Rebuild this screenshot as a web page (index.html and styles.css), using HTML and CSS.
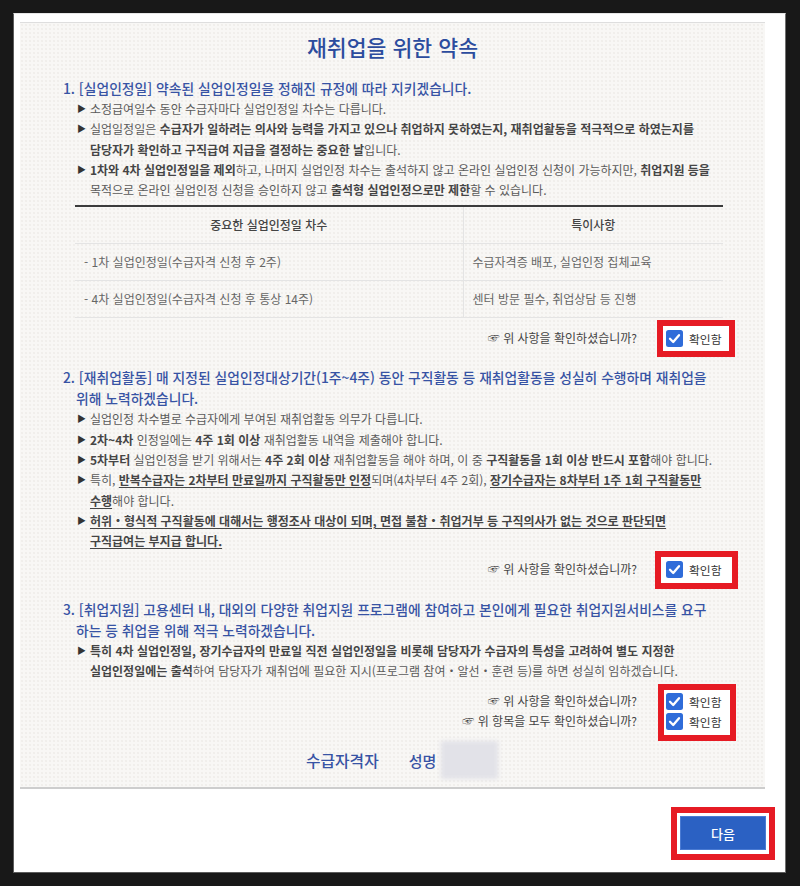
FILE: index.html
```html
<!DOCTYPE html>
<html lang="ko">
<head>
<meta charset="utf-8">
<title>재취업을 위한 약속</title>
<link rel="stylesheet" href="styles.css">
</head>
<body>
<div class="panel">
  <div class="pledge">
    <h1 class="title">재취업을 위한 약속</h1>

    <section class="sec sec1">
      <h2 class="head">1. [실업인정일] 약속된 실업인정일을 정해진 규정에 따라 지키겠습니다.</h2>
      <ul class="bullets">
        <li><span class="mk">▶</span><span>소정급여일수 동안 수급자마다 실업인정일 차수는 다릅니다.</span></li>
        <li><span class="mk">▶</span><span>실업일정일은 <b>수급자가 일하려는 의사와 능력을 가지고 있으나 취업하지 못하였는지, 재취업활동을 적극적으로 하였는지를</b><br><b>담당자가 확인하고 구직급여 지급을 결정하는 중요한 날</b>입니다.</span></li>
        <li><span class="mk">▶</span><span><b>1차와 4차 실업인정일을 제외</b>하고, 나머지 실업인정 차수는 출석하지 않고 온라인 실업인정 신청이 가능하지만, <b>취업지원 등을</b><br>목적으로 온라인 실업인정 신청을 승인하지 않고 <b>출석형 실업인정으로만 제한</b>할 수 있습니다.</span></li>
      </ul>
      <table class="tbl">
        <thead>
          <tr><th class="c1">중요한 실업인정일 차수</th><th>특이사항</th></tr>
        </thead>
        <tbody>
          <tr><td class="c1">- 1차 실업인정일(수급자격 신청 후 2주)</td><td>수급자격증 배포, 실업인정 집체교육</td></tr>
          <tr><td class="c1">- 4차 실업인정일(수급자격 신청 후 통상 14주)</td><td>센터 방문 필수, 취업상담 등 진행</td></tr>
        </tbody>
      </table>
      <div class="check-row">
        <span class="q">☞ 위 사항을 확인하셨습니까?</span>
        <label class="hl hl1"><span class="cb"><svg viewBox="0 0 17 17" width="17" height="17"><rect x="0" y="0" width="17" height="17" rx="2.5" fill="#2f6cd9"/><path d="M4 8.8 L7.2 12 L13 5.2" fill="none" stroke="#fff" stroke-width="2.3" stroke-linecap="round" stroke-linejoin="round"/></svg></span><span class="ok">확인함</span></label>
      </div>
    </section>

    <section class="sec sec2">
      <h2 class="head">2. [재취업활동] 매 지정된 실업인정대상기간(1주~4주) 동안 구직활동 등 재취업활동을 성실히 수행하며 재취업을<br>위해 노력하겠습니다.</h2>
      <ul class="bullets">
        <li><span class="mk">▶</span><span>실업인정 차수별로 수급자에게 부여된 재취업활동 의무가 다릅니다.</span></li>
        <li><span class="mk">▶</span><span><b>2차~4차</b> 인정일에는 <b>4주 1회 이상</b> 재취업활동 내역을 제출해야 합니다.</span></li>
        <li><span class="mk">▶</span><span><b>5차부터</b> 실업인정을 받기 위해서는 <b>4주 2회 이상</b> 재취업활동을 해야 하며, 이 중 <b>구직활동을 1회 이상 반드시 포함</b>해야 합니다.</span></li>
        <li><span class="mk">▶</span><span>특히, <b class="u">반복수급자는 2차부터 만료일까지 구직활동만 인정</b>되며(4차부터 4주 2회), <b class="u">장기수급자는 8차부터 1주 1회 구직활동만</b><br><b class="u">수행</b>해야 합니다.</span></li>
        <li><span class="mk">▶</span><span><b class="u">허위・형식적 구직활동에 대해서는 행정조사 대상이 되며, 면접 불참・취업거부 등 구직의사가 없는 것으로 판단되면</b><br><b class="u">구직급여는 부지급 합니다.</b></span></li>
      </ul>
      <div class="check-row tight">
        <span class="q">☞ 위 사항을 확인하셨습니까?</span>
        <label class="hl hl2"><span class="cb"><svg viewBox="0 0 17 17" width="17" height="17"><rect x="0" y="0" width="17" height="17" rx="2.5" fill="#2f6cd9"/><path d="M4 8.8 L7.2 12 L13 5.2" fill="none" stroke="#fff" stroke-width="2.3" stroke-linecap="round" stroke-linejoin="round"/></svg></span><span class="ok">확인함</span></label>
      </div>
    </section>

    <section class="sec sec3">
      <h2 class="head">3. [취업지원] 고용센터 내, 대외의 다양한 취업지원 프로그램에 참여하고 본인에게 필요한 취업지원서비스를 요구<br>하는 등 취업을 위해 적극 노력하겠습니다.</h2>
      <ul class="bullets">
        <li><span class="mk">▶</span><span><b>특히 4차 실업인정일, 장기수급자의 만료일 직전 실업인정일을 비롯해 담당자가 수급자의 특성을 고려하여 별도 지정한</b><br><b>실업인정일에는 출석</b>하여 담당자가 재취업에 필요한 지시(프로그램 참여・알선・훈련 등)를 하면 성실히 임하겠습니다.</span></li>
      </ul>
      <div class="check-row multi">
        <div class="qs">
          <span class="q">☞ 위 사항을 확인하셨습니까?</span>
          <span class="q">☞ 위 항목을 모두 확인하셨습니까?</span>
        </div>
        <div class="hl hl3">
          <label class="opt"><span class="cb"><svg viewBox="0 0 17 17" width="17" height="17"><rect x="0" y="0" width="17" height="17" rx="2.5" fill="#2f6cd9"/><path d="M4 8.8 L7.2 12 L13 5.2" fill="none" stroke="#fff" stroke-width="2.3" stroke-linecap="round" stroke-linejoin="round"/></svg></span><span class="ok">확인함</span></label>
          <label class="opt"><span class="cb"><svg viewBox="0 0 17 17" width="17" height="17"><rect x="0" y="0" width="17" height="17" rx="2.5" fill="#2f6cd9"/><path d="M4 8.8 L7.2 12 L13 5.2" fill="none" stroke="#fff" stroke-width="2.3" stroke-linecap="round" stroke-linejoin="round"/></svg></span><span class="ok">확인함</span></label>
        </div>
      </div>
    </section>

    <div class="sign">
      <span class="who">수급자격자</span>
      <span class="nm">성명</span>
      <span class="blur"></span>
    </div>
  </div>

  <div class="actions">
    <div class="btn-hl"><button class="btn" type="button">다음</button></div>
  </div>
</div>
</body>
</html>
```

FILE: styles.css
```css
html, body {
  margin: 0;
  padding: 0;
}
body {
  background: #181818;
  padding: 13px 0 0 13px;
  height: 886px;
  box-sizing: border-box;
  font-family: "Noto Sans CJK KR", "Noto Sans", sans-serif;
  overflow: hidden;
}
.panel {
  box-sizing: border-box;
  width: 773px;
  height: 860px;
  background: #ffffff;
  border: 1px solid #5c5c5c;
  border-top-color: #e6e6e6;
  border-right-color: #707070;
}
.pledge {
  box-sizing: border-box;
  width: 745px;
  margin: 8px 0 0 6px;
  background-color: #f8f7f5;
  background-image: radial-gradient(circle, #f0eeeb 0.7px, transparent 1px);
  background-size: 4px 4px;
  border-top: 1px solid #dedede;
  border-bottom: 2px solid #cdcdcd;
  padding: 9px 0 8px;
}
.title {
  margin: 0;
  text-align: center;
  font-size: 21.6px;
  line-height: 30px;
  font-weight: 500;
  color: #2c4c9e;
}
.sec {
  padding: 0 30px 0 43px;
}
.sec1 { margin-top: 16px; }
.sec2 { margin-top: 10.5px; }
.sec3 { margin-top: 10px; }
.head {
  margin: 0;
  font-size: 13.8px;
  line-height: 21px;
  font-weight: 500;
  color: #3753a4;
  padding-left: 13px;
  text-indent: -13px;
  white-space: nowrap;
}
.bullets {
  list-style: none;
  margin: 0 0 0 14px;
  padding: 0;
}
.bullets li {
  display: flex;
  font-size: 12px;
  line-height: 20.3px;
  color: #5a5a5a;
  white-space: nowrap;
}
.bullets b {
  font-weight: 700;
  color: #454545;
}
.bullets b.u {
  text-decoration: underline;
  text-underline-offset: 2px;
}
.mk {
  flex: none;
  width: 13px;
  font-size: 9px;
  color: #333;
}
.tbl {
  margin: 4.5px 0 0 12px;
  width: 648px;
  border-collapse: collapse;
  border-top: 2px solid #3b3b3b;
  font-size: 12px;
  color: #666;
}
.tbl th {
  height: 36px;
  padding: 0;
  font-weight: 500;
  color: #444;
  text-align: center;
  border-bottom: 1px solid #e4e4e4;
}
.tbl td {
  height: 36px;
  padding: 0 9px;
  text-align: left;
  border-bottom: 1px solid #e4e4e4;
}
.tbl .c1 {
  width: 388px;
  box-sizing: border-box;
  border-right: 1px solid #e4e4e4;
}
.check-row {
  display: flex;
  justify-content: flex-end;
  align-items: center;
  margin-top: 2px;
  font-size: 12px;
  color: #444;
}
.check-row.tight {
  margin-top: -1px;
}
.q {
  display: block;
  line-height: 20.3px;
  white-space: nowrap;
}
.hl {
  display: flex;
  align-items: center;
  gap: 6px;
  background: #ffffff;
  border: 6px solid #e61b24;
}
.hl1 {
  margin-left: 20px;
  padding: 3px 6px 3px 3px;
}
.hl2 {
  margin-left: 18px;
  margin-right: -3px;
  padding: 3.5px 9px 3.5px 5px;
}
.check-row.multi {
  align-items: flex-start;
  margin-top: 3px;
}
.qs {
  margin-top: 7px;
  text-align: right;
}
.hl3 {
  flex-direction: column;
  align-items: stretch;
  gap: 0;
  margin-left: 21px;
  margin-right: -1px;
  padding: 1px 7px 3.4px 2px;
}
.opt {
  display: flex;
  align-items: center;
  gap: 6px;
  height: 20.3px;
}
.cb {
  display: block;
  width: 17px;
  height: 17px;
  flex: none;
}
.cb svg { display: block; }
.ok {
  display: block;
  width: 34px;
  line-height: 19px;
  font-size: 11.8px;
  color: #333;
  white-space: nowrap;
}
.sign {
  display: flex;
  align-items: center;
  padding-left: 286px;
  height: 38px;
  margin-top: 0;
  color: #3753a4;
  font-weight: 500;
}
.who {
  font-size: 15.8px;
}
.nm {
  font-size: 15px;
  margin-left: 30px;
}
.blur {
  display: block;
  width: 57px;
  height: 38px;
  margin-left: 5px;
  background: #e2e2e8;
  filter: blur(2px);
}
.actions {
  display: flex;
  justify-content: flex-end;
  padding-right: 10px;
  margin-top: 18px;
}
.btn-hl {
  border: 6px solid #e61b24;
  background: #fff;
  padding: 3px 3px 4px 3px;
}
.btn {
  display: block;
  width: 86px;
  height: 34px;
  margin: 0;
  padding: 0;
  background: #2b61c3;
  border: 1px solid #4a7bd3;
  color: #ffffff;
  font-family: "Noto Sans CJK KR", "Noto Sans", sans-serif;
  font-size: 13px;
  font-weight: 500;
  cursor: pointer;
}
```
